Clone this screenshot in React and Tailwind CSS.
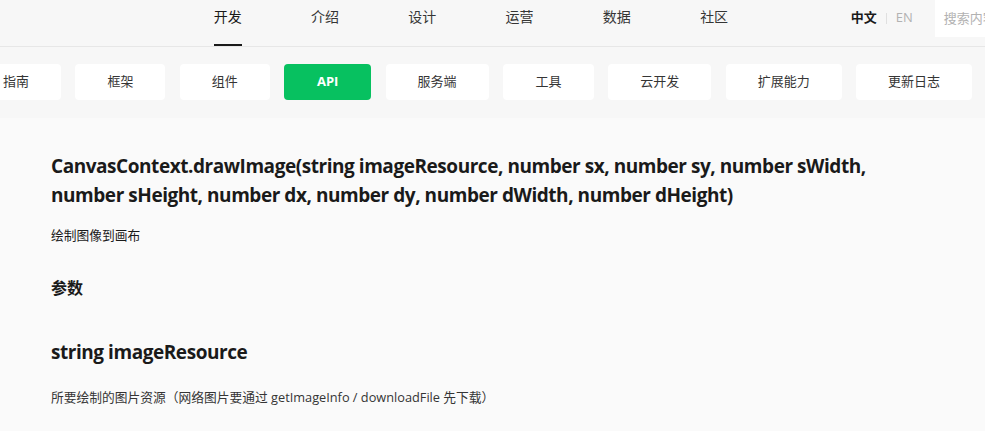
export default function App() {
  const font = { fontFamily: '"Open Sans", "Noto Sans CJK SC", sans-serif' };
  const navs = ["开发", "介绍", "设计", "运营", "数据", "社区"];
  const tabs = [
    ["指南", "w-[90px]"],
    ["框架", "w-[90px]"],
    ["组件", "w-[90px]"],
    ["API", "w-[87px]"],
    ["服务端", "w-[103px]"],
    ["工具", "w-[91px]"],
    ["云开发", "w-[103px]"],
    ["扩展能力", "w-[116px]"],
    ["更新日志", "w-[116px]"],
  ];
  return (
    <div className="w-[985px] h-[431px] overflow-hidden bg-[#fafafa]" style={font}>
      <div className="bg-[#f7f7f7]">
        <div className="h-[47px] border-b border-[#e7e7e7] flex items-start">
          <div className="flex pl-[179px]">
            {navs.map((n, i) => (
              <div key={n} className="w-[97.3px] flex justify-center">
                <div className={"h-[46px] pt-[7px] text-[14px] leading-[20px] " + (i === 0 ? "border-b-2 border-[#1a1a1a] text-[#1a1a1a]" : "text-[#353535]")}>
                  {n}
                </div>
              </div>
            ))}
          </div>
          <div className="ml-[88px] flex items-center h-[36px] text-[13px]">
            <span className="font-bold text-[#1a1a1a]">中文</span>
            <span className="mx-[9px] w-px h-[11px] bg-[#e0e0e0]"></span>
            <span className="text-[#b2b2b2]">EN</span>
          </div>
          <div className="ml-[22px] flex-1 h-[37px] bg-white flex items-center pl-[9px] text-[13px] text-[#b2b2b2] whitespace-nowrap overflow-hidden">
            搜索内容
          </div>
        </div>
        <div className="h-[71px] pt-[17px] flex gap-[14.4px] -ml-[29px]">
          {tabs.map(([t, w]) => (
            <div
              key={t}
              className={
                w +
                " shrink-0 h-[36px] rounded-[4px] flex items-center justify-center text-[13px] " +
                (t === "API" ? "bg-[#07c160] text-white font-bold" : "bg-white text-[#353535]")
              }
            >
              {t}
            </div>
          ))}
        </div>
      </div>
      <div className="pl-[51px] pt-[34px] text-[#1a1a1a]">
        <h1 className="text-[19px] tracking-[-0.45px] leading-[29px] font-bold w-[830px]">
          CanvasContext.drawImage(string imageResource, number sx, number sy, number sWidth, number sHeight, number dx, number dy, number dWidth, number dHeight)
        </h1>
        <p className="mt-[15px] text-[12.75px] leading-[20px]">绘制图像到画布</p>
        <h2 className="mt-[31px] text-[16px] leading-[24px] font-bold">参数</h2>
        <h3 className="mt-[38px] text-[19px] tracking-[-0.45px] leading-[28px] font-bold">string imageResource</h3>
        <p className="mt-[21px] text-[12.75px] leading-[20px] text-[#353535]">
          所要绘制的图片资源（网络图片要通过 getImageInfo / downloadFile 先下载）
        </p>
      </div>
    </div>
  );
}
